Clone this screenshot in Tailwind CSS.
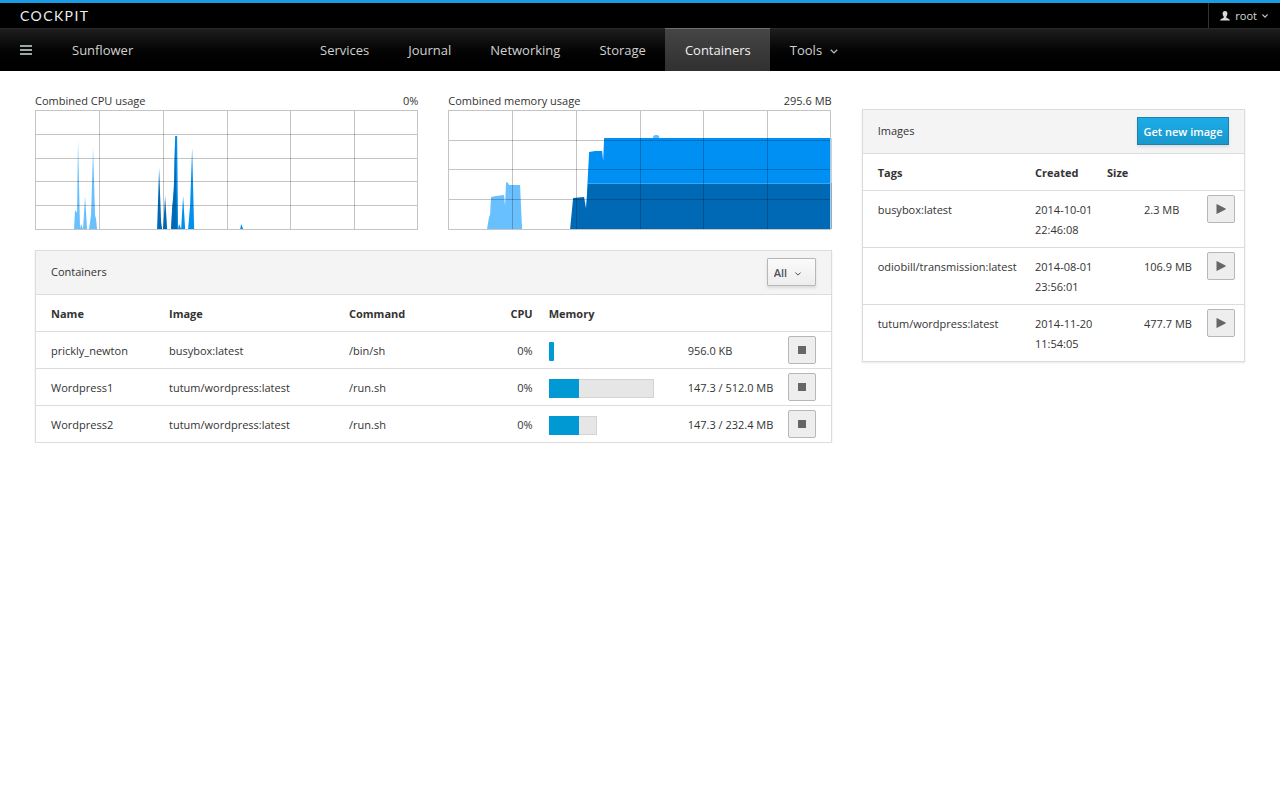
<!DOCTYPE html>
<html lang="en">
<head>
  <meta charset="UTF-8" />
  <meta name="viewport" content="width=device-width, initial-scale=1.0"/>
  <title>Cockpit | Containers</title>
  <script src="https://cdn.jsdelivr.net/npm/@tailwindcss/browser@4"></script>
</head>
<body class="bg-white text-[#333] text-[11px] leading-5 font-['Open_Sans',sans-serif]">

  <!-- Top bar -->
  <header class="bg-black border-t-3 border-[#1a9be3]">
    <div class="h-[25px] flex justify-between items-stretch">
      <a href="#" class="pl-5 flex items-center text-sm text-[#eee] tracking-widest font-['Lato',sans-serif]">COCKPIT</a>
      <button class="flex items-center pl-[11px] pr-3 border-l border-[#333] text-[#d8d8d8]">
        <svg class="mr-[5px]" width="10" height="10" viewBox="0 0 10 10" fill="#d8d8d8"><path d="M5 0C6.600 0 7.400 1.100 7.400 2.600C7.400 4 6.800 5 6.300 5.600V6.800C7.500 7.400 9.600 7.700 10 9.600H0C.4 7.700 2.500 7.400 3.700 6.800V5.600C3.200 5 2.600 4 2.600 2.600C2.600 1.100 3.400 0 5 0Z"/></svg>
        root
        <svg class="ml-[5px]" width="6" height="4" viewBox="0 0 6 4" fill="none" stroke="#bbb" stroke-width="1.2"><path d="M.4 .5L3 3.100L5.600 .5"/></svg>
      </button>
    </div>
    <nav class="h-[43px] flex border-t border-[#2a2a2a] bg-linear-to-b from-[#1e1e1e] to-black text-[13px] text-[#d1d1d1]">
      <div class="w-[300px] flex items-center pl-5">
        <button aria-label="Menu" class="mr-10">
          <svg width="12" height="10" viewBox="0 0 12 10" fill="#9ca6a6"><path d="M0 0h12v2H0zM0 4h12v2H0zM0 8h12v2H0z"/></svg>
        </button>
        <a href="#">Sunflower</a>
      </div>
      <a href="#" class="flex items-center pl-5 pr-[19px]">Services</a>
      <a href="#" class="flex items-center pl-5 pr-[19px]">Journal</a>
      <a href="#" class="flex items-center pl-5 pr-[19px]">Networking</a>
      <a href="#" class="flex items-center pl-5 pr-[19px]">Storage</a>
      <a href="#" class="flex items-center pl-5 pr-[19px] -mt-px border-t border-[#6e6e6e] bg-linear-to-b from-[#454545] to-[#303030] text-[#f1f1f1]">Containers</a>
      <button class="flex items-center pl-5 pr-[19px]">
        Tools
        <svg class="ml-2 mt-[3px]" width="8" height="5" viewBox="0 0 8 5" fill="none" stroke="#bbb" stroke-width="1.3"><path d="M.8 .7L4 3.900L7.200 .7"/></svg>
      </button>
    </nav>
  </header>

  <main class="grid grid-cols-3 items-start gap-[30px] px-[35px] pt-5">
    <div class="col-span-2">

      <!-- Usage graphs -->
      <div class="grid grid-cols-2 gap-[30px]">
        <section>
          <div class="flex justify-between leading-[19px]"><h2>Combined CPU usage</h2><span>0%</span></div>
          <svg class="block w-full h-[120px]" viewBox="0 0 383 120" preserveAspectRatio="none">
            <g fill="#69c0ff">
              <path d="M39 119L40 100L42 103L43 30L45 119L46 114L48 119ZM48 119L50 86L52 119ZM54 119L56 105L58 38L60 105L61 109L62 119Z"/>
            </g>
            <path fill="#0069b5" d="M122 119L124 58L126 112L127 119ZM128 119L130 86L132 119Z"/>
            <path fill="#0090f0" d="M136 119L139 70L140 26H142L143 119L144 114L146 119L146 119L148 86L150 119ZM153 119L155 95L157 38L159 119Z"/>
            <path fill="#0069b5" d="M136 119L137 98L139 80L140 28L142 119Z"/>
            <path fill="#0090f0" d="M205 119L206 114L208 119Z"/>
            <g fill="#000" fill-opacity=".23" shape-rendering="crispEdges">
              <rect x="64" y="1" width="1" height="118"/><rect x="128" y="1" width="1" height="118"/><rect x="192" y="1" width="1" height="118"/><rect x="255" y="1" width="1" height="118"/><rect x="319" y="1" width="1" height="118"/>
              <rect x="1" y="24" width="381" height="1"/><rect x="1" y="48" width="381" height="1"/><rect x="1" y="71" width="381" height="1"/><rect x="1" y="95" width="381" height="1"/>
            </g>
            <path fill="#c4c4c4" fill-rule="evenodd" shape-rendering="crispEdges" d="M0 0H383V120H0ZM1 1V119H382V1Z"/>
          </svg>
        </section>
        <section>
          <div class="flex justify-between leading-[19px]"><h2>Combined memory usage</h2><span>295.6 MB</span></div>
          <svg class="block w-full h-[120px]" viewBox="0 0 383 120" preserveAspectRatio="none">
            <path fill="#69c0ff" d="M39 119L41 107L42 105L43 87L48 86L56 85L57 96L58 72L60 73L61 75H72L74 119Z"/>
            <path fill="#66bcff" d="M205 28V26L207 25H209L211 26V28Z"/>
            <path fill="#0090f3" d="M137 99L138 99L141 42L147 41H154L155 51L156 28H383V119H137Z"/>
            <path fill="#0069b5" d="M122 119L125 88L136 87L138 99L140 73H383V119Z"/>
            <rect fill="#3ba5ee" x="140" y="73" width="243" height="1" shape-rendering="crispEdges"/>
            <g fill="#000" fill-opacity=".23" shape-rendering="crispEdges">
              <rect x="64" y="1" width="1" height="118"/><rect x="128" y="1" width="1" height="118"/><rect x="192" y="1" width="1" height="118"/><rect x="255" y="1" width="1" height="118"/><rect x="319" y="1" width="1" height="118"/>
              <rect x="1" y="30" width="381" height="1"/><rect x="1" y="59" width="381" height="1"/><rect x="1" y="89" width="381" height="1"/>
            </g>
            <path fill="#c4c4c4" fill-rule="evenodd" shape-rendering="crispEdges" d="M0 0H383V120H0ZM1 1V119H382V1Z"/>
          </svg>
        </section>
      </div>

      <!-- Containers -->
      <section class="mt-5 border border-[#dcdcdc] shadow-[0_1px_2px_rgba(0,0,0,0.1)]">
        <div class="flex items-center justify-between px-[15px] pt-[7px] pb-2 bg-[#f4f4f4] border-b border-[#dcdcdc]">
          <h2>Containers</h2>
          <div class="relative">
            <select aria-label="Show containers" class="block appearance-none w-[49px] h-7 pt-px pl-[6px] border border-[#b7b7b7] rounded-[1px] bg-linear-to-b from-[#fafafa] to-[#ededed] shadow-[0_2px_3px_rgba(0,0,0,0.1)] font-semibold text-[#4d5258]">
              <option>All</option>
              <option>Running</option>
            </select>
            <svg class="absolute left-7 top-[14px] pointer-events-none" width="6" height="4" viewBox="0 0 6 4" fill="none" stroke="#4d5258"><path d="M.4 .5L3 3.100L5.600 .5"/></svg>
          </div>
        </div>
        <table class="w-full table-fixed text-left">
          <thead>
            <tr>
              <th class="w-[125px] pt-[9px] pb-[7px] pl-[15px]">Name</th>
              <th class="w-[180px] pt-[9px] pb-[7px] px-2">Image</th>
              <th class="pt-[9px] pb-[7px] px-2">Command</th>
              <th class="w-[60px] pt-[9px] pb-[7px] px-2 text-right">CPU</th>
              <th class="w-[139px] pt-[9px] pb-[7px] px-2">Memory</th>
              <th class="w-[100px]"></th>
              <th class="w-[51px]"></th>
            </tr>
          </thead>
          <tbody>
            <tr class="border-t border-[#dcdcdc]">
              <td class="pt-[9px] pb-[7px] pl-[15px]">prickly_newton</td>
              <td class="pt-[9px] pb-[7px] px-2">busybox:latest</td>
              <td class="pt-[9px] pb-[7px] px-2">/bin/sh</td>
              <td class="pt-[9px] pb-[7px] px-2 text-right">0%</td>
              <td class="pt-[10px] pb-[7px] px-2"><div class="w-[5px] h-[19px] bg-[#0099d3] rounded-[1px]"></div></td>
              <td class="pt-[9px] pb-[7px] pl-2">956.0 KB</td>
              <td class="py-1 pl-2"><button aria-label="Stop" class="size-7 flex items-center justify-center bg-[#eee] border border-[#b7b7b7] rounded-xs"><span class="size-2 bg-[#666]"></span></button></td>
            </tr>
            <tr class="border-t border-[#dcdcdc]">
              <td class="pt-[9px] pb-[7px] pl-[15px]">Wordpress1</td>
              <td class="pt-[9px] pb-[7px] px-2">tutum/wordpress:latest</td>
              <td class="pt-[9px] pb-[7px] px-2">/run.sh</td>
              <td class="pt-[9px] pb-[7px] px-2 text-right">0%</td>
              <td class="pt-[10px] pb-[7px] px-2"><div class="flex w-[105px] h-[19px]"><div class="w-[30px] bg-[#0099d3]"></div><div class="flex-1 bg-[#e6e6e6] border border-l-0 border-[#d3d3d3]"></div></div></td>
              <td class="pt-[9px] pb-[7px] pl-2">147.3 / 512.0 MB</td>
              <td class="py-1 pl-2"><button aria-label="Stop" class="size-7 flex items-center justify-center bg-[#eee] border border-[#b7b7b7] rounded-xs"><span class="size-2 bg-[#666]"></span></button></td>
            </tr>
            <tr class="border-t border-[#dcdcdc]">
              <td class="pt-[9px] pb-[7px] pl-[15px]">Wordpress2</td>
              <td class="pt-[9px] pb-[7px] px-2">tutum/wordpress:latest</td>
              <td class="pt-[9px] pb-[7px] px-2">/run.sh</td>
              <td class="pt-[9px] pb-[7px] px-2 text-right">0%</td>
              <td class="pt-[10px] pb-[7px] px-2"><div class="flex w-12 h-[19px]"><div class="w-[30px] bg-[#0099d3]"></div><div class="flex-1 bg-[#e6e6e6] border border-l-0 border-[#d3d3d3]"></div></div></td>
              <td class="pt-[9px] pb-[7px] pl-2">147.3 / 232.4 MB</td>
              <td class="py-1 pl-2"><button aria-label="Stop" class="size-7 flex items-center justify-center bg-[#eee] border border-[#b7b7b7] rounded-xs"><span class="size-2 bg-[#666]"></span></button></td>
            </tr>
          </tbody>
        </table>
      </section>
    </div>

    <!-- Images -->
    <section class="mt-[18px] border border-[#dcdcdc] shadow-[0_1px_2px_rgba(0,0,0,0.1)]">
      <div class="flex items-center justify-between px-[15px] pt-[7px] pb-2 bg-[#f4f4f4] border-b border-[#dcdcdc]">
        <h2>Images</h2>
        <button class="w-[92px] h-7 pt-px whitespace-nowrap border border-[#1f80ae] bg-linear-to-b from-[#1cace8] to-[#1998cc] shadow-[0_2px_3px_rgba(0,0,0,0.1)] font-semibold text-white">Get new image</button>
      </div>
      <table class="w-full table-fixed text-left">
        <thead>
          <tr>
            <th class="pt-[9px] pb-[7px] pl-[15px]">Tags</th>
            <th class="w-[72px] pt-[9px] pb-[7px] px-2">Created</th>
            <th class="w-[100px] pt-[9px] pb-[7px] px-2">Size</th>
            <th class="w-[45px]"></th>
          </tr>
        </thead>
        <tbody class="align-top">
          <tr class="border-t border-[#dcdcdc]">
            <td class="pt-[9px] pb-[7px] pl-[15px]">busybox:latest</td>
            <td class="pt-[9px] pb-[7px] pl-2">2014-10-01 22:46:08</td>
            <td class="pt-[9px] pb-[7px] pl-[45px]">2.3 MB</td>
            <td class="py-1 pl-2"><button aria-label="Run" class="size-7 flex items-center justify-center bg-[#eee] border border-[#b7b7b7] rounded-xs"><svg width="10" height="10" viewBox="0 0 10 10" fill="#666"><path d="M.5 .6Q.5 -.2 1.200 .2L9.500 4.600Q10 5 9.500 5.400L1.200 9.800Q.5 10.200 .5 9.400Z"/></svg></button></td>
          </tr>
          <tr class="border-t border-[#dcdcdc]">
            <td class="pt-[9px] pb-[7px] pl-[15px]">odiobill/transmission:latest</td>
            <td class="pt-[9px] pb-[7px] pl-2">2014-08-01 23:56:01</td>
            <td class="pt-[9px] pb-[7px] pl-[45px]">106.9 MB</td>
            <td class="py-1 pl-2"><button aria-label="Run" class="size-7 flex items-center justify-center bg-[#eee] border border-[#b7b7b7] rounded-xs"><svg width="10" height="10" viewBox="0 0 10 10" fill="#666"><path d="M.5 .6Q.5 -.2 1.200 .2L9.500 4.600Q10 5 9.500 5.400L1.200 9.800Q.5 10.200 .5 9.400Z"/></svg></button></td>
          </tr>
          <tr class="border-t border-[#dcdcdc]">
            <td class="pt-[9px] pb-[7px] pl-[15px]">tutum/wordpress:latest</td>
            <td class="pt-[9px] pb-[7px] pl-2">2014-11-20 11:54:05</td>
            <td class="pt-[9px] pb-[7px] pl-[45px]">477.7 MB</td>
            <td class="py-1 pl-2"><button aria-label="Run" class="size-7 flex items-center justify-center bg-[#eee] border border-[#b7b7b7] rounded-xs"><svg width="10" height="10" viewBox="0 0 10 10" fill="#666"><path d="M.5 .6Q.5 -.2 1.200 .2L9.500 4.600Q10 5 9.500 5.400L1.200 9.800Q.5 10.200 .5 9.400Z"/></svg></button></td>
          </tr>
        </tbody>
      </table>
    </section>
  </main>

</body>
</html>
